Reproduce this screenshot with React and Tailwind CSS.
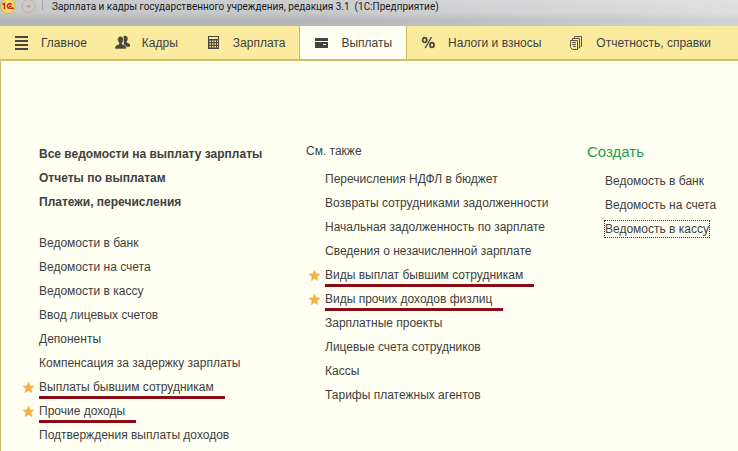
import React from "react";

const ICON = "h-[15px] w-[15px] shrink-0";

function MenuIcon() {
  return (
    <svg viewBox="0 0 15 15" className={ICON} fill="#4b463c" aria-hidden="true">
      <path d="M1 1h13v2H1zM1 5h13v2H1zM1 9h13v2H1zM1 13h13v2H1z" />
    </svg>
  );
}

function PeopleIcon() {
  return (
    <svg viewBox="0 0 15 15" className={ICON} fill="#4b463c" aria-hidden="true">
      <path d="M8.500 1.300c.5-.4 1-.5 1.500-.5 1.700 0 2.700 1.200 2.700 2.900 0 1.300-.5 2.300-1.100 2.800v1l2.400.9c.8.4 1 .9 1 1.700v1.700H9z" />
      <path d="M5.500 1.300c1.800 0 3 1.300 3 3.300 0 1.500-.6 2.700-1.300 3.300v1.200l3 1.300c.7.3 1 .9 1 1.700V14H0v-1.900c0-.8.3-1.400 1-1.700l3-1.300V7.900C3.200 7.300 2.600 6.100 2.600 4.600c0-2 1.200-3.300 2.900-3.300z" stroke="#fbeb9e" strokeWidth=".6" />
    </svg>
  );
}

function CalculatorIcon() {
  return (
    <svg viewBox="0 0 15 15" className={ICON} aria-hidden="true">
      <path d="M2 1h11v13H2z" fill="#4b463c" />
      <path
        d="M3 2h9v2H3zM3.500 5.500h1.500v1.500H3.500zM6 5.500h1.500v1.500H6zM8.500 5.500H10v1.500H8.500zM11 5.500h1v1.500h-1zM3.500 8.200h1.500v1.500H3.500zM6 8.200h1.500v1.500H6zM8.500 8.200H10v1.500H8.500zM11 8.200h1v1.500h-1zM3.500 11h1.500v1.500H3.500zM6 11h1.500v1.500H6zM8.500 11H10v1.500H8.500zM11 11h1v1.500h-1z"
        fill="#fbeb9e"
      />
    </svg>
  );
}

function CardIcon() {
  return (
    <svg viewBox="0 0 15 15" className={ICON} fill="#45453f" aria-hidden="true">
      <path d="M1 3.500q0-.5.500-.5h12q.5 0 .5.500V6H1zM1 7h13v5.500q0 .5-.5.500h-12q-.5 0-.5-.5z" />
      <path d="M9 9h3v1H9z" fill="#fffff2" />
    </svg>
  );
}

function PercentIcon() {
  return (
    <svg viewBox="0 0 15 15" className={ICON} fill="none" stroke="#4b463c" aria-hidden="true">
      <ellipse cx="3.700" cy="5" rx="2" ry="2.400" strokeWidth="1.700" />
      <ellipse cx="11" cy="10" rx="2" ry="2.400" strokeWidth="1.700" />
      <path d="M10.500 2 4.200 13" strokeWidth="1.300" />
    </svg>
  );
}

function DocumentsIcon() {
  return (
    <svg viewBox="0 0 15 15" className={ICON} fill="none" stroke="#5a5345" aria-hidden="true">
      <path d="M5.500 3V1.500h7v10H11.500M3.500 5V3.500h7v9.500H9.500" />
      <path d="M1.500 5.500h7v9h-5l-2-2z" />
      <path d="M3 7.500h4M3 9.500h4M4 11.500h3" />
    </svg>
  );
}

const SECTIONS = [
  { label: "Главное", Icon: MenuIcon },
  { label: "Кадры", Icon: PeopleIcon },
  { label: "Зарплата", Icon: CalculatorIcon },
  { label: "Выплаты", Icon: CardIcon, active: true },
  { label: "Налоги и взносы", Icon: PercentIcon },
  { label: "Отчетность, справки", Icon: DocumentsIcon },
];

const REPORTS = ["Все ведомости на выплату зарплаты", "Отчеты по выплатам", "Платежи, перечисления"];

const PAYMENTS = [
  { label: "Ведомости в банк" },
  { label: "Ведомости на счета" },
  { label: "Ведомости в кассу" },
  { label: "Ввод лицевых счетов" },
  { label: "Депоненты" },
  { label: "Компенсация за задержку зарплаты" },
  { label: "Выплаты бывшим сотрудникам", starred: true },
  { label: "Прочие доходы", starred: true },
  { label: "Подтверждения выплаты доходов" },
];

const SEE_ALSO = [
  { label: "Перечисления НДФЛ в бюджет" },
  { label: "Возвраты сотрудниками задолженности" },
  { label: "Начальная задолженность по зарплате" },
  { label: "Сведения о незачисленной зарплате" },
  { label: "Виды выплат бывшим сотрудникам", starred: true },
  { label: "Виды прочих доходов физлиц", starred: true },
  { label: "Зарплатные проекты" },
  { label: "Лицевые счета сотрудников" },
  { label: "Кассы" },
  { label: "Тарифы платежных агентов" },
];

const CREATE = [
  { label: "Ведомость в банк" },
  { label: "Ведомость на счета" },
  { label: "Ведомость в кассу", focused: true },
];

function Star() {
  return (
    <svg viewBox="0 0 12 12" className="h-[13px] w-[13px]" fill="#f6b042" aria-hidden="true">
      <path d="M6 .5 7.600 4.200l4 .3-3.100 2.600 1 4.100L6 9.100 2.500 11.200l1-4.100L.4 4.500l4-.3z" />
    </svg>
  );
}

function LinkList({ items }) {
  return (
    <ul>
      {items.map(({ label, starred, focused }) => (
        <li key={label} className="flex h-6 items-center">
          <span className="w-[17px] shrink-0">{starred && <Star />}</span>
          <a
            href="#"
            className={
              starred
                ? "relative leading-6 after:absolute after:-right-[11px] after:bottom-0 after:left-0 after:h-[3px] after:bg-[#8a0a18]"
                : focused
                  ? "leading-4 outline-1 outline-dotted outline-[#333333]"
                  : "leading-6"
            }
          >
            {label}
          </a>
        </li>
      ))}
    </ul>
  );
}

export default function App() {
  return (
    <div className="flex h-screen flex-col overflow-hidden whitespace-nowrap bg-[#fffff2] font-['Liberation_Sans',Arial,sans-serif] text-[12px] text-[#404040]">
      <header className="flex h-[26px] shrink-0 items-start bg-[linear-gradient(to_right,transparent_40%,rgba(255,255,255,0.4)),linear-gradient(#cdcdcf,#c6c7c9_50%,#b2b4b7_75%,#b4b6b8)]">
        <svg viewBox="0 0 44 14" className="h-[14px] w-11 shrink-0" aria-hidden="true">
          <defs>
            <radialGradient id="logo">
              <stop offset="0" stopColor="#fff3a0" />
              <stop offset="1" stopColor="#f3cf52" />
            </radialGradient>
          </defs>
          <circle cx="8" cy="6" r="7.500" fill="url(#logo)" stroke="#c9a64a" strokeWidth=".6" />
          <path d="M2.500 4.500 4.500 3.500V9M11.500 4.500A2.300 2.300 0 1 0 9.200 8.200H14M9 6.200h2.500" fill="none" stroke="#d5231f" strokeWidth="1.600" />
          <circle cx="28.500" cy="6" r="6.500" fill="#cfc9c2" stroke="#b5b0a9" />
          <path d="M26 5.500h5l-2.500 2.500z" fill="#a5a09a" />
          <path d="M42.500 0v10" stroke="#a4a5a7" />
        </svg>
        <h1 className="whitespace-pre pl-2 font-[Roboto,'Liberation_Sans',sans-serif] text-[10px] leading-[13px] text-[#1a1a1a]">
          {"Зарплата и кадры государственного учреждения, редакция 3.1  (1С:Предприятие)"}
        </h1>
      </header>

      <nav className="flex h-[35px] shrink-0 border-b-2 border-[#d3bd68] bg-[#fbeb9e]">
        {SECTIONS.map(({ label, Icon, active }) => (
          <a
            key={label}
            href="#"
            aria-current={active ? "page" : undefined}
            className={
              active
                ? "flex items-center gap-3 border-x border-[#cdb75f] bg-[#fffff2] px-[14px]"
                : "flex items-center gap-3 px-[14px]"
            }
          >
            <Icon />
            {label}
          </a>
        ))}
      </nav>

      <main className="flex grow items-start border-l border-[#cbb867] pt-20 pl-[21px]">
        <section className="w-[266px] shrink-0">
          <ul className="pt-px pl-[17px] font-bold">
            {REPORTS.map((label) => (
              <li key={label} className="h-6">
                <a href="#" className="leading-6">{label}</a>
              </li>
            ))}
          </ul>
          <div className="pt-[17px]">
            <LinkList items={PAYMENTS} />
          </div>
        </section>
        <section className="w-[281px] shrink-0">
          <h2 className="pb-1.5 pl-[18px] leading-[20px]">См. также</h2>
          <div className="pl-5">
            <LinkList items={SEE_ALSO} />
          </div>
        </section>
        <section className="shrink-0">
          <h2 className="pb-1.5 pl-[18px] text-[15px] leading-[22px] text-[#1c9c50]">Создать</h2>
          <div className="pl-[19px]">
            <LinkList items={CREATE} />
          </div>
        </section>
      </main>
    </div>
  );
}
